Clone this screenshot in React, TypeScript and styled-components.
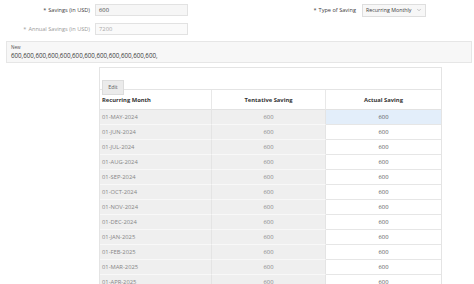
import styled, { createGlobalStyle } from 'styled-components';
import { ChevronDown } from 'lucide-react';

const GlobalStyle = createGlobalStyle`
  html, body {
    margin: 0;
    padding: 0;
    background: #ffffff;
  }
  body {
    font-family: "Open Sans", "Noto Sans", Arial, sans-serif;
    color: #404040;
  }
`;

const months = [
  '01-MAY-2024',
  '01-JUN-2024',
  '01-JUL-2024',
  '01-AUG-2024',
  '01-SEP-2024',
  '01-OCT-2024',
  '01-NOV-2024',
  '01-DEC-2024',
  '01-JAN-2025',
  '01-FEB-2025',
  '01-MAR-2025',
  '01-APR-2025',
];

const Page = styled.div`
  width: 474px;
  height: 284px;
  overflow: hidden;
`;

const Form = styled.div`
  display: grid;
  grid-template-columns: 95px 93px 174px 64px;
  grid-auto-rows: 12px;
  row-gap: 7px;
  padding-top: 4px;
  align-items: center;
`;

const Label = styled.label<{ $disabled?: boolean }>`
  justify-self: end;
  padding-right: 5px;
  font-size: 5.6px;
  color: ${(p) => (p.$disabled ? '#9a9a9a' : '#404040')};
  white-space: nowrap;
`;

const WideLabel = styled(Label)`
  padding-right: 6px;
`;

const Star = styled.span`
  margin-right: 2px;
`;

const TextInput = styled.div<{ $disabled?: boolean }>`
  box-sizing: border-box;
  height: 12px;
  padding: 0 3px;
  display: flex;
  align-items: center;
  border: 1px solid #e2e2e2;
  background: ${(p) => (p.$disabled ? '#fafafa' : '#f6f6f6')};
  font-size: 5.8px;
  color: ${(p) => (p.$disabled ? '#a8a8a8' : '#404040')};
`;

const Select = styled.div`
  box-sizing: border-box;
  height: 13px;
  padding: 0 3px 0 3px;
  display: flex;
  align-items: center;
  justify-content: space-between;
  border: 1px solid #dedede;
  background: #f7f7f7;
  font-size: 5.3px;
  color: #404040;
  white-space: nowrap;
  overflow: hidden;
`;

const DisplayBox = styled.div`
  box-sizing: border-box;
  margin: 6px 2px 0 6px;
  height: 22px;
  padding: 2px 4px 0;
  background: #f7f7f7;
  border: 1px solid #e6e6e6;
`;

const Caption = styled.div`
  font-size: 4.6px;
  color: #505050;
  line-height: 7px;
`;

const Values = styled.div`
  font-size: 6.2px;
  color: #3a3a3a;
  line-height: 9px;
`;

const GridRegion = styled.div`
  box-sizing: border-box;
  margin: 4px 0 0 99px;
  width: 343px;
  border: 1px solid #e4e4e4;
  border-bottom: none;
  background: #ffffff;
`;

const Toolbar = styled.div`
  height: 22px;
  padding: 4px 0 0 2px;
  box-sizing: border-box;
  border-bottom: 1px solid #e4e4e4;
`;

const EditButton = styled.button`
  box-sizing: border-box;
  width: 22px;
  height: 15px;
  padding: 0;
  border: 1px solid #dcdcdc;
  background: #ebebeb;
  font-family: inherit;
  font-size: 5.4px;
  color: #606060;
`;

const Table = styled.div`
  display: grid;
  grid-template-columns: 112px 114px 1fr;
`;

const HeadCell = styled.div<{ $align?: 'left' | 'center' }>`
  height: 19px;
  display: flex;
  align-items: center;
  justify-content: ${(p) => (p.$align === 'left' ? 'flex-start' : 'center')};
  padding-left: ${(p) => (p.$align === 'left' ? '2px' : '0')};
  border-bottom: 1px solid #e2e2e2;
  border-right: 1px solid #e8e8e8;
  font-size: 5.8px;
  font-weight: 700;
  color: #333333;
  &:nth-child(3n) {
    border-right: none;
  }
`;

const Cell = styled.div<{ $readonly?: boolean; $selected?: boolean; $align?: 'left' | 'center' }>`
  height: 14px;
  display: flex;
  align-items: center;
  justify-content: ${(p) => (p.$align === 'left' ? 'flex-start' : 'center')};
  padding-left: ${(p) => (p.$align === 'left' ? '2px' : '0')};
  border-bottom: 1px solid ${(p) => (p.$readonly ? '#f8f8f8' : '#e6e6e6')};
  border-right: 1px solid #e4e4e4;
  background: ${(p) => (p.$selected ? '#e3eefa' : p.$readonly ? '#efefef' : '#ffffff')};
  font-size: 5.8px;
  color: ${(p) => (p.$readonly ? '#858585' : '#555555')};
  &:nth-child(3n) {
    border-right: none;
  }
`;

export default function App() {
  return (
    <Page>
      <GlobalStyle />
      <Form>
        <Label>
          <Star>*</Star>Savings (in USD)
        </Label>
        <TextInput>600</TextInput>
        <WideLabel>
          <Star>*</Star>Type of Saving
        </WideLabel>
        <Select>
          Recurring Monthly
          <ChevronDown size={6} strokeWidth={1.5} color="#707070" />
        </Select>
        <Label $disabled>
          <Star>*</Star>Annual Savings (in USD)
        </Label>
        <TextInput $disabled>7200</TextInput>
      </Form>

      <DisplayBox>
        <Caption>New</Caption>
        <Values>{months.map(() => '600,').join('')}</Values>
      </DisplayBox>

      <GridRegion>
        <Toolbar>
          <EditButton>Edit</EditButton>
        </Toolbar>
        <Table>
          <HeadCell $align="left">Recurring Month</HeadCell>
          <HeadCell>Tentative Saving</HeadCell>
          <HeadCell>Actual Saving</HeadCell>
          {months.map((m, i) => [
            <Cell key={`${m}-m`} $readonly $align="left">
              {m}
            </Cell>,
            <Cell key={`${m}-t`} $readonly>
              600
            </Cell>,
            <Cell key={`${m}-a`} $selected={i === 0}>
              600
            </Cell>,
          ])}
        </Table>
      </GridRegion>
    </Page>
  );
}
